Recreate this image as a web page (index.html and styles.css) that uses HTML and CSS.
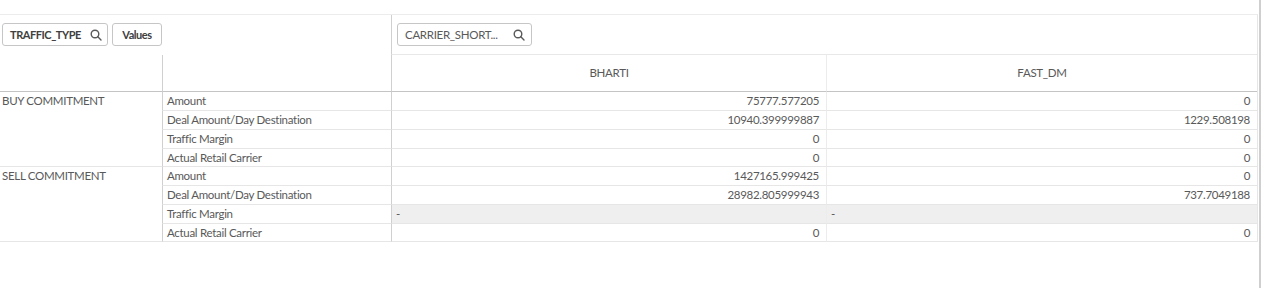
FILE: index.html
```html
<!DOCTYPE html>
<html>
<head>
<meta charset="utf-8">
<link rel="stylesheet" href="styles.css">
</head>
<body>
<div class="page">
  <div class="main">
    <div class="pivot">
      <div class="dims-left">
        <button class="chip strong chip-traffic"><span>TRAFFIC_TYPE</span><svg class="search" viewBox="0 0 12 12"><circle cx="5" cy="5" r="3.8"/><line x1="7.8" y1="7.8" x2="11" y2="11"/></svg></button>
        <button class="chip strong chip-values"><span>Values</span></button>
      </div>
      <div class="dims-top">
        <button class="chip chip-carrier"><span>CARRIER_SHORT...</span><svg class="search" viewBox="0 0 12 12"><circle cx="5" cy="5" r="3.8"/><line x1="7.8" y1="7.8" x2="11" y2="11"/></svg></button>
      </div>

      <div class="hcorner"></div>
      <div class="hcorner2"></div>
      <div class="colhead c3">BHARTI</div>
      <div class="colhead c4">FAST_DM</div>

      <div class="group g1">BUY COMMITMENT</div>
      <div class="group g2">SELL COMMITMENT</div>

      <div class="measure">Amount</div>
      <div class="val c3">75777.577205</div>
      <div class="val c4">0</div>

      <div class="measure">Deal Amount/Day Destination</div>
      <div class="val c3">10940.399999887</div>
      <div class="val c4">1229.508198</div>

      <div class="measure">Traffic Margin</div>
      <div class="val c3">0</div>
      <div class="val c4">0</div>

      <div class="measure">Actual Retail Carrier</div>
      <div class="val c3">0</div>
      <div class="val c4">0</div>

      <div class="measure">Amount</div>
      <div class="val c3">1427165.999425</div>
      <div class="val c4">0</div>

      <div class="measure">Deal Amount/Day Destination</div>
      <div class="val c3">28982.805999943</div>
      <div class="val c4">737.7049188</div>

      <div class="measure">Traffic Margin</div>
      <div class="val c3 null">-</div>
      <div class="val c4 null">-</div>

      <div class="measure">Actual Retail Carrier</div>
      <div class="val c3">0</div>
      <div class="val c4">0</div>
    </div>
  </div>
  <div class="scrollbar"></div>
</div>
</body>
</html>
```
FILE: styles.css
```css
* { box-sizing: border-box; }
html, body { margin: 0; padding: 0; background: #fff; }
body {
  font-family: "Lato", "Liberation Sans", sans-serif;
  font-size: 11.5px;
  letter-spacing: -0.3px;
  color: #595959;
  width: 1261px;
  height: 288px;
  overflow: hidden;
}
.page {
  display: flex;
  height: 288px;
}
.main {
  width: 1258px;
  padding-top: 14px;
}
.scrollbar {
  width: 3px;
  border-left: 1px solid #fff;
  background: #cfcfcf;
}
.pivot {
  display: grid;
  grid-template-columns: 162px 229px 435px 431px;
  grid-template-rows: 40px 37px 19px 19px 19px 18px 19px 19px 19px 18px;
  border-top: 1px solid #ececec;
  border-right: 1px solid #e6e6e6;
  width: 1258px;
}
.dims-left {
  grid-column: 1 / 3;
  grid-row: 1;
  display: flex;
  gap: 4px;
  padding: 8px 0 0 2px;
  align-items: flex-start;
}
.dims-top {
  grid-column: 3 / 5;
  grid-row: 1;
  border-left: 1px solid #d0d0d0;
  border-bottom: 1px solid #e8e8e8;
  padding: 8px 0 0 5px;
  display: flex;
  align-items: flex-start;
}
.chip {
  font-family: inherit;
  font-size: 11.5px;
  letter-spacing: -0.3px;
  color: #595959;
  background: #fff;
  border: 1px solid #c6c6c6;
  border-radius: 3px;
  height: 23px;
  margin: 0;
  display: flex;
  align-items: center;
  white-space: nowrap;
  overflow: visible;
}
.chip.strong {
  color: #404040;
  font-weight: bold;
  font-size: 11px;
  letter-spacing: -0.45px;
}
.chip-traffic {
  width: 106px;
  padding: 0 5px 0 7px;
  justify-content: space-between;
}
.chip-values {
  width: 50px;
  padding: 0;
  justify-content: center;
}
.chip-carrier {
  width: 135px;
  padding: 0 6px 0 7px;
  justify-content: space-between;
}
.search {
  flex: none;
  width: 12px;
  height: 12px;
  fill: none;
  stroke: #595959;
  stroke-width: 1.4;
  stroke-linecap: round;
}
.hcorner {
  grid-column: 1;
  grid-row: 2;
  border-bottom: 1px solid #c4c4c4;
}
.hcorner2 {
  grid-column: 2;
  grid-row: 2;
  border-left: 1px solid #d0d0d0;
  border-bottom: 1px solid #c4c4c4;
}
.colhead {
  grid-row: 2;
  display: flex;
  align-items: center;
  justify-content: center;
  border-bottom: 1px solid #c4c4c4;
  padding-bottom: 1px;
}
.c3 { grid-column: 3; border-left: 1px solid #d0d0d0; }
.c4 { grid-column: 4; border-left: 1px solid #ececec; }
.group {
  grid-column: 1;
  padding: 0 2px;
  border-bottom: 1px solid #e6e6e6;
  line-height: 17px;
}
.g1 { grid-row: 3 / 7; }
.g2 { grid-row: 7 / 11; }
.measure {
  grid-column: 2;
  border-left: 1px solid #d0d0d0;
  border-bottom: 1px solid #e6e6e6;
  padding: 0 4px 1px;
  display: flex;
  align-items: center;
  white-space: nowrap;
}
.val {
  border-bottom: 1px solid #e6e6e6;
  display: flex;
  align-items: center;
  justify-content: flex-end;
  padding: 0 7px 1px 4px;
}
.val.null {
  justify-content: flex-start;
  background: #efefef;
}
```
